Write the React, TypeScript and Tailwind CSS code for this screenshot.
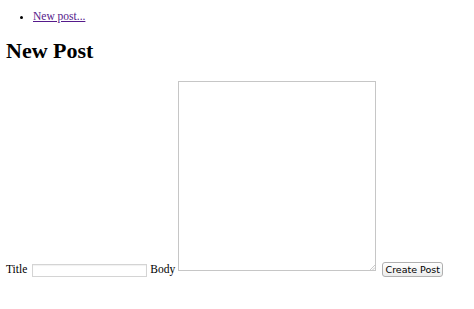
export default function App() {
  return (
    <div className="min-h-[309px] bg-white px-[6px] text-black">
      <ul className="list-disc pl-[27px] pt-[10px] font-['Liberation_Serif',serif] text-[11.5px] leading-[13px]">
        <li>
          <a href="#" className="text-[#551a8b] underline">
            New post...
          </a>
        </li>
      </ul>

      <h1 className="mt-[15px] mb-[17px] font-['Liberation_Serif',serif] text-[22px] font-bold leading-[26px]">
        New Post
      </h1>

      <form className="flex items-end font-['Liberation_Serif',serif] text-[11.5px] leading-[13px]">
        <span className="mb-[1.5px]">Title</span>
        <input
          type="text"
          className="ml-[5px] h-[13px] w-[115px] border border-[#d4d4d4] bg-white shadow-[inset_0_1px_1px_rgba(0,0,0,0.06)] outline-none"
        />
        <span className="mb-[1.5px] ml-[3px]">Body</span>
        <div className="relative mb-[6px] ml-[3px]">
          <textarea className="block h-[190px] w-[198px] resize-none border border-[#c6c6c6] bg-white outline-none" />
          {/* tiny resize grip */}
          <svg className="absolute right-[1px] bottom-[1px]" width="6" height="6" viewBox="0 0 6 6">
            <path d="M1 6 L6 1 M3.5 6 L6 3.5" stroke="#bdbdbd" strokeWidth="0.8" />
          </svg>
        </div>
        <button
          type="button"
          className="ml-[6px] h-[15px] w-[61px] rounded-[3px] border border-[#b0b0b0] bg-gradient-to-b from-white to-[#ececec] font-['DejaVu_Sans',sans-serif] text-[9.5px] leading-[13px] text-black"
        >
          Create Post
        </button>
      </form>
    </div>
  );
}
